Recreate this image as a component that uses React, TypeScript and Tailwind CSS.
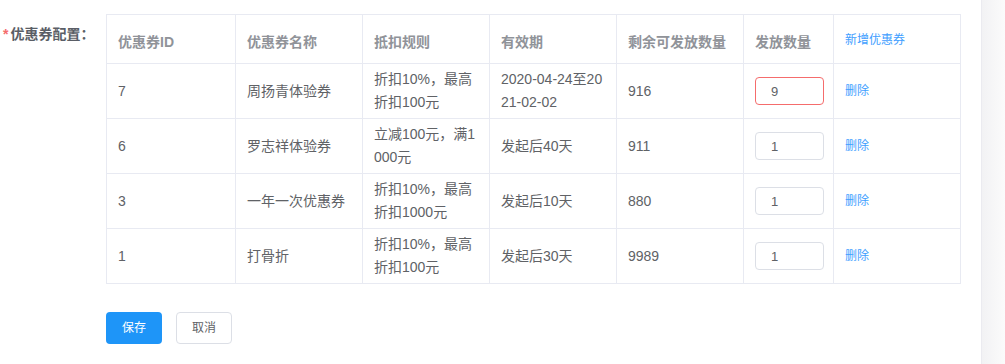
import React from 'react';

type Coupon = {
    id: string;
    name: string;
    rule: string[];
    period: string[];
    remain: string;
    count: string;
    error?: boolean;
};

const coupons: Coupon[] = [
    { id: '7', name: '周扬青体验券', rule: ['折扣10%，最高', '折扣100元'], period: ['2020-04-24至20', '21-02-02'], remain: '916', count: '9', error: true },
    { id: '6', name: '罗志祥体验券', rule: ['立减100元，满1', '000元'], period: ['发起后40天'], remain: '911', count: '1' },
    { id: '3', name: '一年一次优惠券', rule: ['折扣10%，最高', '折扣1000元'], period: ['发起后10天'], remain: '880', count: '1' },
    { id: '1', name: '打骨折', rule: ['折扣10%，最高', '折扣100元'], period: ['发起后30天'], remain: '9989', count: '1' },
];

const headers = ['优惠券ID', '优惠券名称', '抵扣规则', '有效期', '剩余可发放数量', '发放数量'];
const widths = ['w-[129px]', 'w-[127px]', 'w-[127px]', 'w-[127px]', 'w-[127px]', 'w-[90px]', 'w-[127px]'];

const td = 'border border-[#e8eaf2] px-[11px] align-middle text-left';

const App = () => {
    return (
        <div
            className="flex h-[364px] w-full bg-white text-[14px] text-[#606266]"
            style={{ fontFamily: '"Liberation Sans", "Noto Sans CJK SC", sans-serif' }}
        >
            <div className="flex flex-1 pt-[14px]">
                {/* form label */}
                <div className="w-[106px] pl-[3px] leading-[40px] font-bold text-[#5a5e66]">
                    <span className="mr-[2px] text-[#f56c6c]">*</span>优惠券配置：
                </div>

                <div className="flex flex-col">
                    <table className="table-fixed border-collapse w-[854px]">
                        <colgroup>
                            {widths.map((w, i) => (
                                <col key={i} className={w} />
                            ))}
                        </colgroup>
                        <thead>
                            <tr className="h-[49px]">
                                {headers.map((h) => (
                                    <th key={h} className={`${td} pt-[6px] font-semibold text-[#909399]`}>
                                        {h}
                                    </th>
                                ))}
                                <th className={`${td} pt-[2px] font-normal text-[12px] text-[#409eff]`}>新增优惠券</th>
                            </tr>
                        </thead>
                        <tbody>
                            {coupons.map((c) => (
                                <tr key={c.id} className="h-[55px] leading-[23px]">
                                    <td className={td}>{c.id}</td>
                                    <td className={td}>{c.name}</td>
                                    <td className={td}>
                                        {c.rule.map((l) => (
                                            <div key={l}>{l}</div>
                                        ))}
                                    </td>
                                    <td className={td}>
                                        {c.period.map((l) => (
                                            <div key={l}>{l}</div>
                                        ))}
                                    </td>
                                    <td className={td}>{c.remain}</td>
                                    <td className={td}>
                                        <div
                                            className={`flex h-[28px] w-[69px] items-center rounded-[4px] border pl-[15px] text-[13px] ${
                                                c.error ? 'border-[#f56c6c]' : 'border-[#dcdfe6]'
                                            }`}
                                        >
                                            {c.count}
                                        </div>
                                    </td>
                                    <td className={`${td} text-[12px] text-[#409eff]`}>删除</td>
                                </tr>
                            ))}
                        </tbody>
                    </table>

                    <div className="mt-[28px] flex gap-[14px]">
                        <button className="h-[32px] w-[56px] rounded-[4px] bg-[#1e95f8] text-[12px] text-white">保存</button>
                        <button className="h-[32px] w-[56px] rounded-[4px] border border-[#dcdfe6] bg-white text-[12px] text-[#606266]">
                            取消
                        </button>
                    </div>
                </div>
            </div>

            {/* right panel edge */}
            <div className="w-[24px] border-l border-[#ebebf0] bg-gradient-to-r from-[#f2f2f4] to-[#fbfbfb]" />
        </div>
    );
};

export default App;
